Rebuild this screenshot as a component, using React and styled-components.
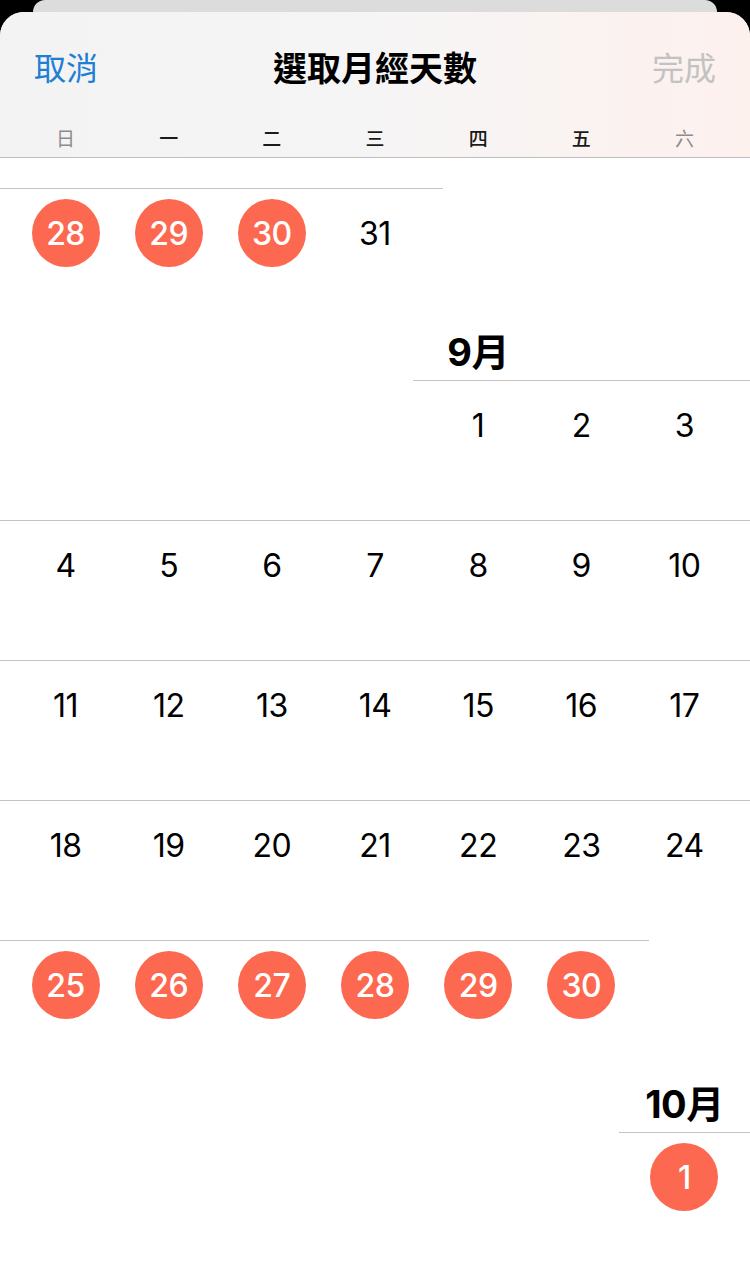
import React from 'react';
import styled, { createGlobalStyle } from 'styled-components';

const PAD = 14;
const COL = (750 - PAD * 2) / 7;

const GlobalStyle = createGlobalStyle`
  html, body {
    margin: 0;
    padding: 0;
    background: #000;
  }

  body {
    font-family: Inter, "Noto Sans CJK TC", sans-serif;
    -webkit-font-smoothing: antialiased;
  }
`;

const Screen = styled.div`
  width: 750px;
  height: 1266px;
  overflow: hidden;
  background: #000;
  display: flex;
  flex-direction: column;
`;

const BackStrip = styled.div`
  height: 12px;
  padding: 0 33px;
  flex-shrink: 0;
`;

const BackCard = styled.div`
  height: 100%;
  background: #dcdcdc;
  border-radius: 14px 14px 0 0;
`;

const Sheet = styled.div`
  flex: 1;
  display: flex;
  flex-direction: column;
  background: #fff;
  border-radius: 24px 24px 0 0;
  overflow: hidden;
`;

const SheetHeader = styled.div`
  background: linear-gradient(90deg, #f3f3f3 0%, #f6f5f5 50%, #fdf1ee 100%);
  border-bottom: 1px solid #bdbdbd;
  flex-shrink: 0;
`;

const NavBar = styled.div`
  height: 108px;
  display: flex;
  align-items: center;
  justify-content: space-between;
  padding: 0 34px;
`;

const NavButton = styled.span`
  font-family: "Noto Sans CJK TC", sans-serif;
  font-size: 32px;
  color: ${(p) => (p.$disabled ? '#c2c2c2' : '#1f7fd3')};
  width: 80px;
  text-align: ${(p) => (p.$right ? 'right' : 'left')};
`;

const Title = styled.h1`
  margin: 0;
  font-family: "Noto Sans CJK TC", sans-serif;
  font-size: 34px;
  font-weight: 700;
  color: #000;
`;

const WeekdayRow = styled.div`
  display: grid;
  grid-template-columns: repeat(7, ${COL}px);
  padding: 6px ${PAD}px 0;
  height: 31px;
`;

const Weekday = styled.span`
  font-family: "Noto Sans CJK TC", sans-serif;
  font-size: 19px;
  font-weight: ${(p) => (p.$weekend ? 400 : 500)};
  color: ${(p) => (p.$weekend ? '#8c8c8c' : '#1a1a1a')};
  text-align: center;
  line-height: 24px;
`;

const Body = styled.div`
  flex: 1;
  overflow: hidden;
`;

const Spacer = styled.div`
  height: ${(p) => p.$h}px;
`;

const MonthHeader = styled.div`
  display: grid;
  grid-template-columns: repeat(7, ${COL}px);
  padding: 0 ${PAD}px 5px;
  height: 52px;
  box-sizing: border-box;
  align-items: center;
`;

const MonthLabel = styled.span`
  grid-column: ${(p) => p.$col + 1};
  font-family: Inter, "Noto Sans CJK TC", sans-serif;
  font-size: 38px;
  line-height: 44px;
  font-weight: 700;
  color: #000;
  text-align: center;
  white-space: nowrap;
  letter-spacing: -0.5px;
`;

const Rule = styled.div`
  height: 1px;
  background: #c4c4c4;
  margin-left: ${(p) => p.$start}px;
  margin-right: ${(p) => 750 - p.$end}px;
`;

const WeekGrid = styled.div`
  display: grid;
  grid-template-columns: repeat(7, ${COL}px);
  padding: 0 ${PAD}px;
  height: 139px;
`;

const DayCell = styled.div`
  display: flex;
  justify-content: center;
  padding-top: 10px;
`;

const DayMark = styled.div`
  width: 68px;
  height: 68px;
  border-radius: 50%;
  display: flex;
  align-items: center;
  justify-content: center;
  font-size: 32px;
  font-weight: ${(p) => (p.$on ? 500 : 400)};
  letter-spacing: -0.5px;
  color: ${(p) => (p.$on ? '#fff' : '#000')};
  background: ${(p) => (p.$on ? '#fd6950' : 'transparent')};
`;

const WEEKDAYS = ['日', '一', '二', '三', '四', '五', '六'];

const blank = (n) => Array.from({ length: n }, () => null);
const range = (a, b) => Array.from({ length: b - a + 1 }, (_, i) => a + i);

const months = [
  {
    label: null,
    weeks: [[28, 29, 30, 31, ...blank(3)]],
    marked: [28, 29, 30],
  },
  {
    label: '9月',
    weeks: [
      [...blank(4), 1, 2, 3],
      range(4, 10),
      range(11, 17),
      range(18, 24),
      [...range(25, 30), null],
    ],
    marked: range(25, 30),
  },
  {
    label: '10月',
    weeks: [[...blank(6), 1]],
    marked: [1],
  },
];

// line over a week spans the filled days, a little past the cell edges
const ruleExtent = (week) => {
  const cols = week.map((d, i) => (d ? i : -1)).filter((i) => i >= 0);
  const first = cols[0];
  const last = cols[cols.length - 1];
  const start = first === 0 ? 0 : PAD + first * COL - 14;
  const end = last === 6 ? 750 : PAD + (last + 1) * COL + 16;
  return { start, end };
};

const Week = ({ days, marked }) => {
  const { start, end } = ruleExtent(days);
  return (
    <>
      <Rule $start={start} $end={end} />
      <WeekGrid>
        {days.map((d, i) => (
          <DayCell key={i}>
            {d && <DayMark $on={marked.includes(d)}>{d}</DayMark>}
          </DayCell>
        ))}
      </WeekGrid>
    </>
  );
};

const Month = ({ label, weeks, marked }) => {
  const firstCol = weeks[0].findIndex((d) => d);
  return (
    <section>
      {label && (
        <MonthHeader>
          <MonthLabel $col={firstCol}>{label}</MonthLabel>
        </MonthHeader>
      )}
      {weeks.map((w, i) => (
        <Week key={i} days={w} marked={marked} />
      ))}
    </section>
  );
};

export default function App() {
  return (
    <>
      <GlobalStyle />
      <Screen>
        <BackStrip>
          <BackCard />
        </BackStrip>
        <Sheet>
          <SheetHeader>
            <NavBar>
              <NavButton>取消</NavButton>
              <Title>選取月經天數</Title>
              <NavButton $disabled $right>完成</NavButton>
            </NavBar>
            <WeekdayRow>
              {WEEKDAYS.map((w, i) => (
                <Weekday key={w} $weekend={i === 0 || i === 6}>{w}</Weekday>
              ))}
            </WeekdayRow>
          </SheetHeader>
          <Body>
            <Spacer $h={30} />
            {months.map((m, i) => (
              <Month key={i} {...m} />
            ))}
          </Body>
        </Sheet>
      </Screen>
    </>
  );
}
